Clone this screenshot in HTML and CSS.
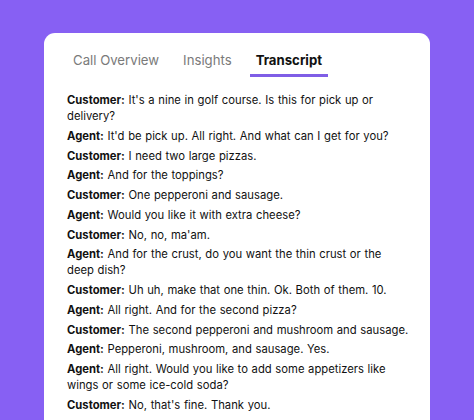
FILE: index.html
```html
<!DOCTYPE html>
<html>
<head>
<meta charset="utf-8">
<link rel="stylesheet" href="styles.css">
</head>
<body>
<div class="card">
  <div class="tabs">
    <div class="tab">Call Overview</div>
    <div class="tab">Insights</div>
    <div class="tab active">Transcript</div>
  </div>
  <div class="transcript">
    <p><b>Customer:</b> It's a nine in golf course. Is this for pick up or delivery?</p>
    <p><b>Agent:</b> It'd be pick up. All right. And what can I get for you?</p>
    <p><b>Customer:</b> I need two large pizzas.</p>
    <p><b>Agent:</b> And for the toppings?</p>
    <p><b>Customer:</b> One pepperoni and sausage.</p>
    <p><b>Agent:</b> Would you like it with extra cheese?</p>
    <p><b>Customer:</b> No, no, ma'am.</p>
    <p><b>Agent:</b> And for the crust, do you want the thin crust or the deep dish?</p>
    <p><b>Customer:</b> Uh uh, make that one thin. Ok. Both of them. 10.</p>
    <p><b>Agent:</b> All right. And for the second pizza?</p>
    <p><b>Customer:</b> The second pepperoni and mushroom and sausage.</p>
    <p><b>Agent:</b> Pepperoni, mushroom, and sausage. Yes.</p>
    <p><b>Agent:</b> All right. Would you like to add some appetizers like wings or some ice-cold soda?</p>
    <p><b>Customer:</b> No, that's fine. Thank you.</p>
  </div>
</div>
</body>
</html>
```
FILE: styles.css
```css
html, body {
  margin: 0;
  padding: 0;
}
body {
  background: #8760f3;
  font-family: Inter, "Liberation Sans", sans-serif;
  color: #111;
  height: 420px;
  overflow: hidden;
}
.card {
  margin: 33px 0 0 44px;
  width: 386px;
  height: 387px;
  background: #fff;
  border-radius: 11px 11px 0 0;
  box-sizing: border-box;
  padding: 17px 20px 0 23px;
  overflow: hidden;
}
.tabs {
  display: flex;
  gap: 12px;
}
.tab {
  font-size: 13.2px;
  line-height: 20px;
  padding: 0 6px 4px;
  color: #7a7a7a;
  border-bottom: 3px solid transparent;
}
.tab.active {
  color: #111;
  font-weight: 700;
  border-bottom-color: #7f5ee6;
}
.transcript {
  margin-top: 15px;
  display: flex;
  flex-direction: column;
  gap: 3.75px;
}
.transcript p {
  margin: 0;
  font-size: 11.25px;
  line-height: 16px;
  word-spacing: 0.5px;
}
.transcript b {
  font-weight: 700;
}
```
